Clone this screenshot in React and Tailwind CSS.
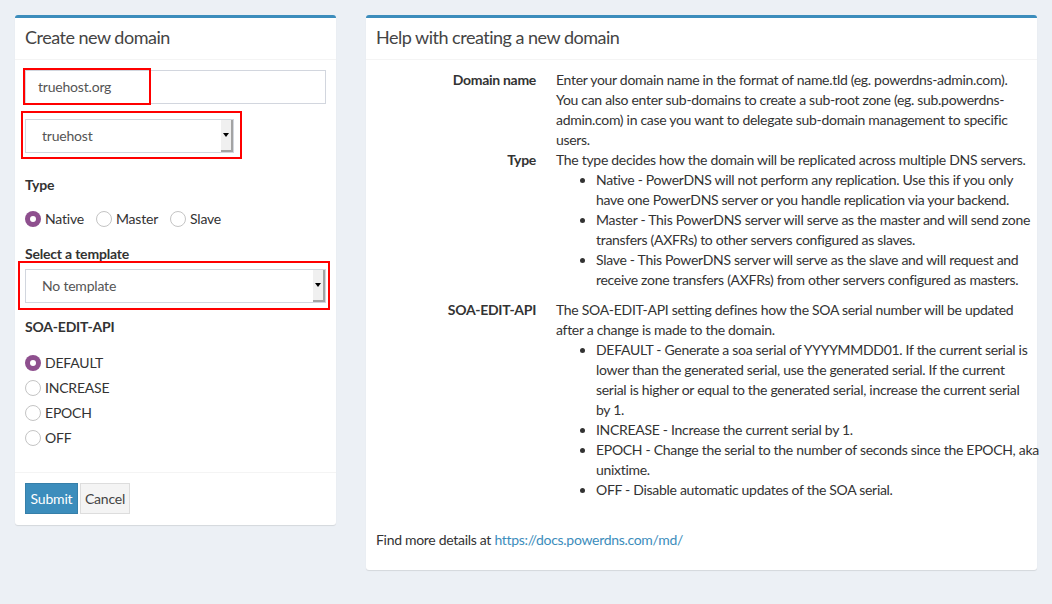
import React from "react";

function Radio({ checked }) {
  return checked ? (
    <span className="w-[16px] h-[16px] rounded-full bg-[#8e4f8e] flex items-center justify-center shrink-0">
      <span className="w-[6px] h-[6px] rounded-full bg-white" />
    </span>
  ) : (
    <span className="w-[16px] h-[16px] rounded-full border border-[#c4c4c4] bg-white shrink-0" />
  );
}

function FakeSelect({ value, widthClass }) {
  return (
    <div className={`relative h-[34px] ${widthClass} border border-[#d2d6de] bg-white flex items-stretch`}>
      <div className="flex-1 flex items-center pl-[16px] text-[14px] text-[#555]">{value}</div>
      <div className="w-[12px] bg-[#f0f0f0] border-r-[2px] border-b-[2px] border-[#a3a3a3] flex items-center justify-center">
        <span className="w-0 h-0 border-l-[3px] border-r-[3px] border-t-[4px] border-l-transparent border-r-transparent border-t-black" />
      </div>
    </div>
  );
}

function BoxHeader({ title }) {
  return (
    <div className="h-[42px] px-[10px] pb-[3px] flex items-center border-b border-[#f4f4f4]">
      <h3 className="text-[18px] leading-none text-[#444] tracking-[-0.5px]">{title}</h3>
    </div>
  );
}

export default function App() {
  return (
    <div
      className="min-h-[604px] bg-[#ecf0f5] pt-[15px] px-[15px] flex items-start gap-[30px] text-[#333] text-[14px] leading-[20px] tracking-[-0.2px]"
      style={{ fontFamily: "Lato, 'Noto Sans', sans-serif" }}
    >
      {/* Left box */}
      <div className="w-[321px] bg-white border-t-[3px] border-[#3c8dbc] rounded-[3px] shadow-[0_1px_1px_rgba(0,0,0,0.1)]">
        <BoxHeader title="Create new domain" />
        <div className="p-[10px] pb-[24px]">
          <div className="relative">
            <div className="h-[34px] border border-[#d2d6de] flex items-center pl-[12px] text-[14px] text-[#555]">
              truehost.org
            </div>
            <div className="absolute left-[-2px] top-[-2px] w-[128px] h-[37px] border-[2px] border-[#ff0000]" />
          </div>
          <div className="relative mt-[15px]">
            <FakeSelect value="truehost" widthClass="w-[209px] h-[33px]" />
            <div className="absolute left-[-4px] top-[-8px] w-[221px] h-[48px] border-[2px] border-[#ff0000]" />
          </div>
          <div className="mt-[22px] font-bold">Type</div>
          <div className="mt-[14px] flex items-center h-[20px]">
            <Radio checked />
            <span className="ml-[4px] mr-[12px]">Native</span>
            <Radio />
            <span className="ml-[4px] mr-[12px]">Master</span>
            <Radio />
            <span className="ml-[4px]">Slave</span>
          </div>
          <div className="mt-[15px] font-bold">Select a template</div>
          <div className="relative mt-[5px]">
            <FakeSelect value="No template" widthClass="w-[301px]" />
            <div className="absolute left-[-7px] top-[-8px] w-[312px] h-[49px] border-[2px] border-[#ff0000]" />
          </div>
          <div className="mt-[14px] font-bold">SOA-EDIT-API</div>
          <div className="mt-[16px] flex flex-col gap-[5px]">
            {[
              ["DEFAULT", true],
              ["INCREASE", false],
              ["EPOCH", false],
              ["OFF", false],
            ].map(([l, c]) => (
              <div key={l} className="flex items-center h-[20px]">
                <Radio checked={c} />
                <span className="ml-[4px]">{l}</span>
              </div>
            ))}
          </div>
        </div>
        <div className="border-t border-[#f4f4f4] pt-[10px] px-[10px] pb-[11px] flex gap-[2px]">
          <button className="h-[31px] w-[53px] bg-[#3c8dbc] border border-[#367fa9] text-white text-[14px]">
            Submit
          </button>
          <button className="h-[31px] w-[50px] bg-[#f4f4f4] border border-[#ddd] text-[#444] text-[14px]">
            Cancel
          </button>
        </div>
      </div>

      {/* Right box */}
      <div className="w-[671px] bg-white border-t-[3px] border-[#3c8dbc] rounded-[3px] shadow-[0_1px_1px_rgba(0,0,0,0.1)]">
        <BoxHeader title="Help with creating a new domain" />
        <div className="p-[10px] tracking-[-0.3px]">
          <div className="mb-[20px]">
            <div className="flex">
              <div className="w-[160px] text-right font-bold shrink-0">Domain name</div>
              <div className="ml-[20px] whitespace-nowrap">
                Enter your domain name in the format of name.tld (eg. powerdns-admin.com).
                <br />
                You can also enter sub-domains to create a sub-root zone (eg. sub.powerdns-
                <br />
                admin.com) in case you want to delegate sub-domain management to specific
                <br />
                users.
              </div>
            </div>
            <div className="flex">
              <div className="w-[160px] text-right font-bold shrink-0">Type</div>
              <div className="ml-[20px] whitespace-nowrap">
                The type decides how the domain will be replicated across multiple DNS servers.
                <ul className="list-disc pl-[40px] mb-[10px]">
                  <li>
                    Native - PowerDNS will not perform any replication. Use this if you only
                    <br />
                    have one PowerDNS server or you handle replication via your backend.
                  </li>
                  <li>
                    Master - This PowerDNS server will serve as the master and will send zone
                    <br />
                    transfers (AXFRs) to other servers configured as slaves.
                  </li>
                  <li>
                    Slave - This PowerDNS server will serve as the slave and will request and
                    <br />
                    receive zone transfers (AXFRs) from other servers configured as masters.
                  </li>
                </ul>
              </div>
            </div>
            <div className="flex">
              <div className="w-[160px] text-right font-bold shrink-0">SOA-EDIT-API</div>
              <div className="ml-[20px] whitespace-nowrap">
                The SOA-EDIT-API setting defines how the SOA serial number will be updated
                <br />
                after a change is made to the domain.
                <ul className="list-disc pl-[40px] mb-[10px]">
                  <li>
                    DEFAULT - Generate a soa serial of YYYYMMDD01. If the current serial is
                    <br />
                    lower than the generated serial, use the generated serial. If the current
                    <br />
                    serial is higher or equal to the generated serial, increase the current serial
                    <br />
                    by 1.
                  </li>
                  <li>INCREASE - Increase the current serial by 1.</li>
                  <li>
                    EPOCH - Change the serial to the number of seconds since the EPOCH, aka
                    <br />
                    unixtime.
                  </li>
                  <li>OFF - Disable automatic updates of the SOA serial.</li>
                </ul>
              </div>
            </div>
          </div>
          <p className="mb-[10px]">
            Find more details at{" "}
            <a className="text-[#3c8dbc]" href="#">
              https://docs.powerdns.com/md/
            </a>
          </p>
        </div>
      </div>
    </div>
  );
}
